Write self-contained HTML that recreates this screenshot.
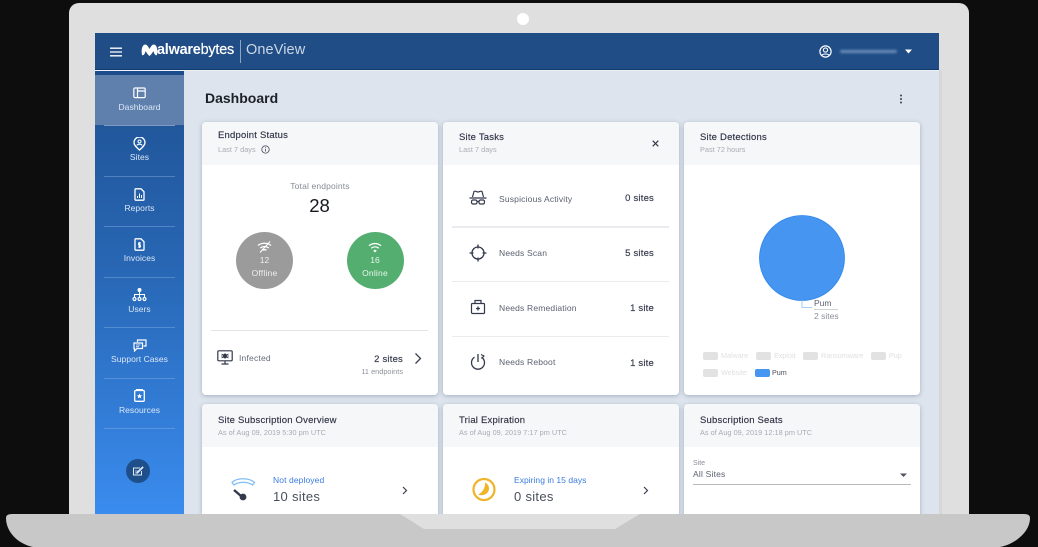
<!DOCTYPE html>
<html><head><meta charset="utf-8"><style>
html,body{margin:0;padding:0;background:#0d0d0d}
#p{position:relative;width:1038px;height:547px;overflow:hidden;background:#0d0d0d;font-family:"Liberation Sans",sans-serif;filter:blur(.25px)}
#p div,#p svg{position:absolute}
.t{white-space:nowrap;line-height:1}
.c{transform:translateX(-50%)}
.r{transform:translateX(-100%)}
.card{background:#fff;border-radius:4px;box-shadow:0 1px 4px rgba(90,110,135,.45);overflow:hidden}
.hd{left:0;right:0;top:0;height:43px;background:#f6f7f9}
.nv{color:#dbe7f6;font-size:8.500px;left:139.500px;letter-spacing:.05px}
.dv{left:104px;width:71px;height:1px;background:rgba(150,190,235,.38)}
.ti{font-size:9.500px;color:#2e3345;letter-spacing:.2px;-webkit-text-stroke:.15px #2e3345}
.su{font-size:7.300px;color:#a7abb3;letter-spacing:.03px}
.gl{font-size:8.500px;color:#5b6070;letter-spacing:.18px}
.vl{font-size:9.500px;color:#3a3f50;letter-spacing:.2px;-webkit-text-stroke:.2px #3a3f50}
.sw{height:1px;left:452px;width:217px;background:#e9ebee}
.lg{background:#e2e2e2;width:15px;height:8px;border-radius:2px}
.ll{font-size:7.200px;color:#e0e0e0}
</style></head><body><div id="p">
<!-- lid -->
<div style="left:69px;top:3px;width:900px;height:530px;background:#dfdfdf;border-radius:10px 10px 0 0"></div>
<div style="left:517px;top:13px;width:12px;height:12px;background:#fff;border-radius:50%"></div>
<!-- screen -->
<div style="left:95px;top:33px;width:844px;height:482px;background:#dde4ed;overflow:hidden"></div>
<div style="left:939px;top:70px;width:3px;height:445px;background:#d7d7d7"></div>
<div style="left:95px;top:33px;width:844px;height:36px;background:#204d86"></div>
<div style="left:95px;top:69px;width:844px;height:1px;background:#0f3a72"></div>
<div style="left:95px;top:70px;width:844px;height:1px;background:#eef2f7"></div>
<!-- header -->
<svg style="left:110px;top:47px" width="12" height="10"><path d="M0 1.200H12M0 5H12M0 8.800H12" stroke="#fff" stroke-width="1.300"/></svg>
<svg style="left:141px;top:43px" width="17" height="14" viewBox="0 0 17 14"><path d="M1 12C0 7 1 2 4 1.500C6 1.500 7.500 4 8.500 6C9.500 4 11 1.500 13 1.500C16 2 17 7 16 12C14.500 13 13 11 12.500 8C11.500 9.500 10 12 8.500 13C7 12 5.500 9.500 4.500 8C4 11 2.500 13 1 12Z" fill="#fff"/></svg>
<div class="t" style="left:157px;top:43px;font-size:14.400px;color:#fff;letter-spacing:-.2px;font-weight:bold">alware<span style="font-weight:normal;-webkit-text-stroke:.2px #fff">bytes</span></div>
<div style="left:240px;top:40px;width:1px;height:23px;background:#8fa4bf"></div>
<div class="t" style="left:246px;top:43px;font-size:14.500px;color:#cbd7e6;letter-spacing:.1px">OneView</div>
<svg style="left:819px;top:45px" width="13" height="13" viewBox="0 0 13 13" fill="none" stroke="#fff"><circle cx="6.500" cy="6.500" r="5.600" stroke-width="1.200"/><circle cx="6.500" cy="5" r="2.100" stroke-width="1.100"/><path d="M2.800 10.500C3.500 8.500 9.500 8.500 10.200 10.500" stroke-width="1.100"/></svg>
<div style="left:840px;top:50px;width:57px;height:3px;background:#6d8fba;filter:blur(1.300px);border-radius:2px"></div>
<svg style="left:905px;top:49px" width="7" height="5"><path d="M0 .5H7L3.500 4.500Z" fill="#fff"/></svg>
<!-- sidebar -->
<div style="left:95px;top:71px;width:89px;height:444px;background:linear-gradient(#1f5192 0,#2867b5 45%,#3a8cef 100%)"></div>
<div style="left:95px;top:71px;width:89px;height:4px;background:#1c4c8b"></div>
<div style="left:95px;top:75px;width:89px;height:50px;background:#5f80ac"></div>
<div class="dv" style="top:125px;background:#7d9ac0"></div>
<div class="dv" style="top:176px"></div><div class="dv" style="top:226px"></div><div class="dv" style="top:277px"></div><div class="dv" style="top:327px"></div><div class="dv" style="top:378px"></div><div class="dv" style="top:428px"></div>
<svg style="left:133px;top:87px" width="13" height="12" viewBox="0 0 13 12" fill="none" stroke="#fff" stroke-width="1.200"><rect x=".8" y="1" width="11.400" height="9.600" rx="1.200"/><path d="M4.500 1V10.500M4.500 4H12.200"/></svg>
<div class="t c nv" style="top:103px">Dashboard</div>
<svg style="left:133px;top:137px" width="13" height="14" viewBox="0 0 13 14" fill="none" stroke="#fff"><path d="M6.500 13C3 10 1 8 1 5.500A5.500 5.500 0 0 1 12 5.500C12 8 10 10 6.500 13Z" stroke-width="1.300"/><circle cx="6.500" cy="4.500" r="1.500" stroke-width="1"/><path d="M3.800 8.500C4.500 6.800 8.500 6.800 9.200 8.500" stroke-width="1"/></svg>
<div class="t c nv" style="top:153px">Sites</div>
<svg style="left:134px;top:188px" width="11" height="13" viewBox="0 0 11 13" fill="none" stroke="#fff"><path d="M1 1.500A.7.7 0 0 1 1.700 .8H7L10 3.800V11.500A.7.7 0 0 1 9.300 12.200H1.700A.7.7 0 0 1 1 11.500Z" stroke-width="1.300"/><path d="M3.500 10V8M5.500 10V5.500M7.500 10V7" stroke-width="1"/></svg>
<div class="t c nv" style="top:204px">Reports</div>
<svg style="left:134px;top:238px" width="11" height="13" viewBox="0 0 11 13" fill="none" stroke="#fff"><path d="M1 1.500A.7.7 0 0 1 1.700 .8H7L10 3.800V11.500A.7.7 0 0 1 9.300 12.200H1.700A.7.7 0 0 1 1 11.500Z" stroke-width="1.300"/><path d="M7 5H4.500V7H6.500V9H4M5.500 4V10" stroke-width=".9"/></svg>
<div class="t c nv" style="top:254px">Invoices</div>
<svg style="left:132px;top:288px" width="15" height="14" viewBox="0 0 15 14" fill="#fff" stroke="#fff"><circle cx="7.500" cy="2" r="1.500"/><path d="M7.500 3.500V9M2.500 9V6.500H12.500V9" fill="none"/><circle cx="2.500" cy="11" r="1.500" fill="none" stroke-width="1.200"/><circle cx="7.500" cy="11" r="1.500" fill="none" stroke-width="1.200"/><circle cx="12.500" cy="11" r="1.500" fill="none" stroke-width="1.200"/></svg>
<div class="t c nv" style="top:305px">Users</div>
<svg style="left:133px;top:339px" width="14" height="13" viewBox="0 0 14 13" fill="none" stroke="#fff" stroke-width="1.200"><path d="M4.500 3V1H13V7H10.500"/><path d="M1 4H9.500V9.500H4L1.500 12V9.500H1Z"/><path d="M3 6H7.500M3 7.800H6" stroke-width=".8"/></svg>
<div class="t c nv" style="top:355px">Support Cases</div>
<svg style="left:134px;top:389px" width="11" height="13" viewBox="0 0 11 13"><rect x=".7" y="1.500" width="9.600" height="10.800" rx="1" fill="none" stroke="#fff" stroke-width="1.300"/><path d="M2 .5H9" stroke="#fff"/><path d="M5.500 4.500L6.300 6.200L8 6.400L6.800 7.600L7.100 9.300L5.500 8.500L3.900 9.300L4.200 7.600L3 6.400L4.700 6.200Z" fill="#fff"/></svg>
<div class="t c nv" style="top:406px">Resources</div>
<div style="left:126px;top:459px;width:24px;height:24px;border-radius:50%;background:#1f4f8a"></div>
<svg style="left:132px;top:465px" width="13" height="12" viewBox="0 0 13 12" fill="none" stroke="#dfe8f3"><path d="M8 3H1.500V10H9.500V6" stroke-width="1"/><path d="M4 8L10.500 1.500L11.500 2.500L5.500 8.500Z" fill="#dfe8f3" stroke-width=".5"/><path d="M3 6H6M3 8H4.500" stroke-width=".7"/></svg>
<!-- title -->
<div class="t" style="left:205px;top:91px;font-size:14px;font-weight:bold;color:#1d2029">Dashboard</div>
<svg style="left:899px;top:94px" width="4" height="10"><circle cx="2" cy="1.500" r="1" fill="#3a3f50"/><circle cx="2" cy="5" r="1" fill="#3a3f50"/><circle cx="2" cy="8.500" r="1" fill="#3a3f50"/></svg>
<!-- card 1 -->
<div class="card" style="left:202px;top:122px;width:236px;height:273px"><div class="hd"></div></div>
<div class="t ti" style="left:218px;top:131px">Endpoint Status</div>
<div class="t su" style="left:218px;top:146px">Last 7 days</div>
<svg style="left:261px;top:145px" width="9" height="9" viewBox="0 0 9 9" fill="none" stroke="#555b68"><circle cx="4.500" cy="4.500" r="3.700" stroke-width=".9"/><path d="M4.500 4V6.500M4.500 2.300V3.200" stroke-width=".9"/></svg>
<div class="t c" style="left:320px;top:182px;font-size:8.500px;color:#868a94;letter-spacing:.15px">Total endpoints</div>
<div class="t c" style="left:319.500px;top:197px;font-size:18.500px;color:#16181f">28</div>
<div style="left:236px;top:232px;width:57px;height:57px;border-radius:50%;background:#9b9b9b"></div>
<div style="left:347px;top:232px;width:57px;height:57px;border-radius:50%;background:#54ae6f"></div>
<svg style="left:257px;top:241px" width="15" height="12" viewBox="0 0 15 12" fill="none" stroke="#fff" stroke-width="1.300"><path d="M1 4.500C4.500 1.500 10.500 1.500 14 4.500M3.300 7C5.500 5.200 9.500 5.200 11.700 7M5.500 9.200C6.500 8.500 8.500 8.500 9.500 9.200"/><path d="M3 11.500L13 .5" stroke-width="1.100"/></svg>
<svg style="left:368px;top:242px" width="14" height="11" viewBox="0 0 14 11" fill="none" stroke="#fff" stroke-width="1.300"><path d="M1 3.800C4.500 .8 9.500 .8 13 3.800M3.200 6.200C5.500 4.400 8.500 4.400 10.800 6.200"/><path d="M7 7.500L8.800 8.800L7 10.500L5.200 8.800Z" fill="#fff" stroke="none"/></svg>
<div class="t c" style="left:264.500px;top:256px;font-size:8.500px;color:#eee">12</div>
<div class="t c" style="left:264.500px;top:269px;font-size:8.500px;color:#eee;letter-spacing:.2px">Offline</div>
<div class="t c" style="left:375px;top:256px;font-size:8.500px;color:#e8f5ec">16</div>
<div class="t c" style="left:375px;top:269px;font-size:8.500px;color:#e8f5ec;letter-spacing:.2px">Online</div>
<div style="left:211px;top:330px;width:217px;height:1px;background:#e2e4e7"></div>
<svg style="left:217px;top:350px" width="16" height="15" viewBox="0 0 16 15" fill="none" stroke="#33384a"><rect x=".8" y=".8" width="14.400" height="10" rx="1" stroke-width="1.200"/><path d="M8 11V13.500M4.500 14H11.500" stroke-width="1.200"/><ellipse cx="8" cy="6" rx="2" ry="2.500" fill="#33384a" stroke="none"/><path d="M4.500 4L6.500 5M11.500 4L9.500 5M4.500 8L6.500 7M11.500 8L9.500 7M4 6H6M10 6H12" stroke-width=".7"/></svg>
<div class="t" style="left:239px;top:354px;font-size:8.500px;color:#666b78;letter-spacing:.2px">Infected</div>
<div class="t r vl" style="left:403px;top:355px">2 sites</div>
<div class="t r su" style="left:403px;top:368px;color:#8e929b">11 endpoints</div>
<svg style="left:414px;top:352px" width="8" height="13"><path d="M1.500 1.500L6.500 6.500L1.500 11.500" fill="none" stroke="#3a3f50" stroke-width="1.300"/></svg>
<!-- card 2 -->
<div class="card" style="left:443px;top:122px;width:236px;height:273px"><div class="hd"></div></div>
<div class="t ti" style="left:459px;top:133px">Site Tasks</div>
<div class="t su" style="left:459px;top:146px">Last 7 days</div>
<svg style="left:652px;top:140px" width="7" height="7"><path d="M.7 .7L6.300 6.300M6.300 .7L.7 6.300" stroke="#2e3345" stroke-width="1.100"/></svg>
<svg style="left:469px;top:189px" width="18" height="18" viewBox="0 0 18 18" fill="none" stroke="#33384a" stroke-width="1.200"><path d="M3.500 8L5 2.500C6.500 1.500 7.500 3 9 3C10.500 3 11.500 1.500 13 2.500L14.500 8"/><path d="M.5 9H17.500"/><rect x="2.500" y="11" width="5.500" height="4" rx="1.500"/><rect x="10" y="11" width="5.500" height="4" rx="1.500"/><path d="M8 12.500H10"/></svg>
<div class="t gl" style="left:499px;top:195px">Suspicious Activity</div>
<div class="t r vl" style="left:654px;top:194px">0 sites</div>
<div class="sw" style="top:226px;height:2px"></div>
<svg style="left:469px;top:244px" width="18" height="18" viewBox="0 0 18 18" fill="none" stroke="#33384a" stroke-width="1.300"><circle cx="9" cy="9" r="6"/><path d="M9 .5V4.500M9 13.500V17.500M.5 9H4.500M13.500 9H17.500"/></svg>
<div class="t gl" style="left:499px;top:249px">Needs Scan</div>
<div class="t r vl" style="left:654px;top:249px">5 sites</div>
<div class="sw" style="top:281px"></div>
<svg style="left:470px;top:299px" width="16" height="16" viewBox="0 0 16 16" fill="none" stroke="#33384a" stroke-width="1.200"><rect x="1.500" y="4.500" width="13" height="10" rx="1"/><path d="M5 4.500V1.500H11V4.500"/><path d="M8 7.500V11.500M6 9.500H10" stroke-width="1.300"/></svg>
<div class="t gl" style="left:499px;top:304px">Needs Remediation</div>
<div class="t r vl" style="left:654px;top:304px">1 site</div>
<div class="sw" style="top:336px"></div>
<svg style="left:470px;top:353px" width="16" height="17" viewBox="0 0 16 17" fill="none" stroke="#33384a" stroke-width="1.300"><path d="M4.500 4.200A6.500 6.500 0 1 0 11.500 4.200"/><path d="M8 1V9"/><path d="M11 1.500L14 3L11.500 5.500" stroke-width="1.100"/></svg>
<div class="t gl" style="left:499px;top:358px">Needs Reboot</div>
<div class="t r vl" style="left:654px;top:359px">1 site</div>
<!-- card 3 -->
<div class="card" style="left:684px;top:122px;width:236px;height:273px"><div class="hd"></div></div>
<div class="t ti" style="left:700px;top:133px">Site Detections</div>
<div class="t su" style="left:700px;top:146px">Past 72 hours</div>
<svg style="left:755px;top:212px" width="95" height="100"><circle cx="47" cy="46" r="42.500" fill="#4695f0" stroke="#2f86ec" stroke-width=".8"/><path d="M47 88.500V95.500H57" fill="none" stroke="#a6cdf7" stroke-width="1"/></svg>
<div class="t" style="left:814px;top:299px;font-size:8.500px;color:#5b6070">Pum</div>
<div style="left:814px;top:309px;width:24px;height:1px;background:#d0d2d6"></div>
<div class="t" style="left:814px;top:312px;font-size:8.500px;color:#8b8f98">2 sites</div>
<div class="lg" style="left:703px;top:352px"></div><div class="t ll" style="left:721px;top:352px">Malware</div>
<div class="lg" style="left:756px;top:352px"></div><div class="t ll" style="left:774px;top:352px">Exploit</div>
<div class="lg" style="left:803px;top:352px"></div><div class="t ll" style="left:821px;top:352px">Ransomware</div>
<div class="lg" style="left:871px;top:352px"></div><div class="t ll" style="left:889px;top:352px">Pup</div>
<div class="lg" style="left:703px;top:369px"></div><div class="t ll" style="left:721px;top:369px">Website</div>
<div class="lg" style="left:755px;top:369px;background:#4695f0"></div><div class="t ll" style="left:772px;top:369px;color:#4a4f5c">Pum</div>
<!-- row 2 -->
<div class="card" style="left:202px;top:404px;width:236px;height:130px"><div class="hd"></div></div>
<div class="t ti" style="left:218px;top:416px">Site Subscription Overview</div>
<div class="t su" style="left:218px;top:429px">As of Aug 09, 2019 5:30 pm UTC</div>
<svg style="left:230px;top:476px" width="27" height="26" viewBox="0 0 27 26" fill="none"><path d="M2 6.500C7 1.500 19 1.500 24.500 6.500L22.500 9C18 5.500 8.500 5.500 4 9Z" stroke="#7fbdf5" stroke-width="1.200"/><path d="M4 14L11 20" stroke="#33384a" stroke-width="2.400"/><circle cx="13" cy="21" r="3.400" fill="#33384a"/></svg>
<div class="t" style="left:273px;top:476px;font-size:8.500px;color:#3a7be0;letter-spacing:.1px">Not deployed</div>
<div class="t" style="left:273px;top:490px;font-size:13px;color:#4a4f5c;letter-spacing:.3px">10 sites</div>
<svg style="left:402px;top:486px" width="6" height="9"><path d="M1 1L4.500 4.500L1 8" fill="none" stroke="#3a3f50" stroke-width="1.200"/></svg>
<div class="card" style="left:443px;top:404px;width:236px;height:130px"><div class="hd"></div></div>
<div class="t ti" style="left:459px;top:416px">Trial Expiration</div>
<div class="t su" style="left:459px;top:429px">As of Aug 09, 2019 7:17 pm UTC</div>
<svg style="left:471px;top:477px" width="26" height="25" viewBox="0 0 26 25"><circle cx="13" cy="12.500" r="10.500" fill="none" stroke="#f0b429" stroke-width="2.200"/><path d="M14 5.500C18 7 19 12 17 15C15 18 10 19 7 17.500C11 16 14.500 11 14 5.500Z" fill="#f0b429"/></svg>
<div class="t" style="left:514px;top:476px;font-size:8.500px;color:#3a7be0;letter-spacing:.03px">Expiring in 15 days</div>
<div class="t" style="left:514px;top:490px;font-size:13px;color:#4a4f5c;letter-spacing:.3px">0 sites</div>
<svg style="left:643px;top:486px" width="6" height="9"><path d="M1 1L4.500 4.500L1 8" fill="none" stroke="#3a3f50" stroke-width="1.200"/></svg>
<div class="card" style="left:684px;top:404px;width:236px;height:130px"><div class="hd"></div></div>
<div class="t ti" style="left:700px;top:416px">Subscription Seats</div>
<div class="t su" style="left:700px;top:429px">As of Aug 09, 2019 12:18 pm UTC</div>
<div class="t" style="left:693px;top:460px;font-size:7px;color:#8b8f98">Site</div>
<div class="t" style="left:693px;top:470px;font-size:8.500px;color:#5b6070;letter-spacing:.2px">All Sites</div>
<svg style="left:900px;top:473px" width="7" height="5"><path d="M0 .5H7L3.500 4Z" fill="#50555f"/></svg>
<div style="left:693px;top:484px;width:218px;height:1px;background:#b8babd"></div>
<!-- base -->
<svg style="left:0;top:0" width="1038" height="547"><path d="M12 514H1024Q1030 514 1030 518C1030 532 1015 544 1000 547H33C18 544 6 532 6 518Q6 514 12 514Z" fill="#c8c8c8"/><path d="M400 514L424 529H615L640 514Z" fill="#dfdfdf"/></svg>
</div></body></html>
